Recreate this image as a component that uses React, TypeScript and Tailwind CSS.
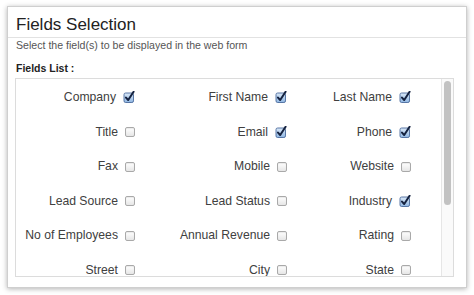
const FIELDS: { label: string; checked: boolean }[] = [
  { label: "Company", checked: true },
  { label: "First Name", checked: true },
  { label: "Last Name", checked: true },
  { label: "Title", checked: false },
  { label: "Email", checked: true },
  { label: "Phone", checked: true },
  { label: "Fax", checked: false },
  { label: "Mobile", checked: false },
  { label: "Website", checked: false },
  { label: "Lead Source", checked: false },
  { label: "Lead Status", checked: false },
  { label: "Industry", checked: true },
  { label: "No of Employees", checked: false },
  { label: "Annual Revenue", checked: false },
  { label: "Rating", checked: false },
  { label: "Street", checked: false },
  { label: "City", checked: false },
  { label: "State", checked: false },
];

function Box({ checked }: { checked: boolean }) {
  if (checked) {
    return (
      <svg width="12" height="12" viewBox="0 0 12 12" className="shrink-0">
        <defs>
          <linearGradient id="cb" x1="0" y1="0" x2="0" y2="1">
            <stop offset="0" stopColor="#dbe9f8" />
            <stop offset="1" stopColor="#8fb6e2" />
          </linearGradient>
        </defs>
        <rect x="1" y="2" width="9.5" height="9.5" rx="1.6" fill="url(#cb)" stroke="#4a6a9c" strokeWidth="0.9" />
        <path d="M3 6.6 L5.2 9 L10.6 0.8" fill="none" stroke="#14213f" strokeWidth="2" strokeLinecap="round" strokeLinejoin="round" />
      </svg>
    );
  }
  return (
    <span className="mt-[1px] block h-[10px] w-[10px] shrink-0 rounded-[2px] border border-[#a9a9a9] bg-gradient-to-b from-white to-[#e6e6e6] shadow-[inset_0_1px_1px_rgba(0,0,0,0.08)]" />
  );
}

export default function App() {
  return (
    <div className="h-[295px] w-[474px] bg-white pl-[7px] pt-[6px] font-['Liberation_Sans',Arial,sans-serif]">
      <div className="flex h-[282px] w-[460px] flex-col border border-[#cfcfcf] bg-white shadow-[0_1px_5px_rgba(0,0,0,0.3)]">
        <div className="border-b border-[#e2e2e2] pb-[1px] pl-[8px] pt-[6px] text-[17px] leading-[23px] text-[#222]">
          Fields Selection
        </div>
        <p className="pl-[8px] text-[10.6px] leading-[14px] text-[#555]">
          Select the field(s) to be displayed in the web form
        </p>
        <p className="mt-[9px] pl-[8px] text-[10.5px] font-bold leading-[14px] text-[#222]">
          Fields List :
        </p>
        <div className="ml-[7px] mt-[3px] flex h-[199px] w-[439px] overflow-hidden border border-[#dcdcdc]">
          <div className="grid flex-1 grid-cols-[122px_152px_124px] content-start pt-[1px]">
            {FIELDS.map((f) => (
              <div
                key={f.label}
                className="flex h-[34.5px] items-center justify-end gap-[7px] pr-[3px] text-[12.2px] text-[#404040]"
              >
                <span>{f.label}</span>
                <Box checked={f.checked} />
              </div>
            ))}
          </div>
          <div className="w-[12px] border-l border-[#e6e6e6] bg-[#fafafa] px-[2px] pt-[2px]">
            <div className="h-[124px] w-[7px] rounded-full bg-[#c2c2c2]" />
          </div>
        </div>
      </div>
    </div>
  );
}
